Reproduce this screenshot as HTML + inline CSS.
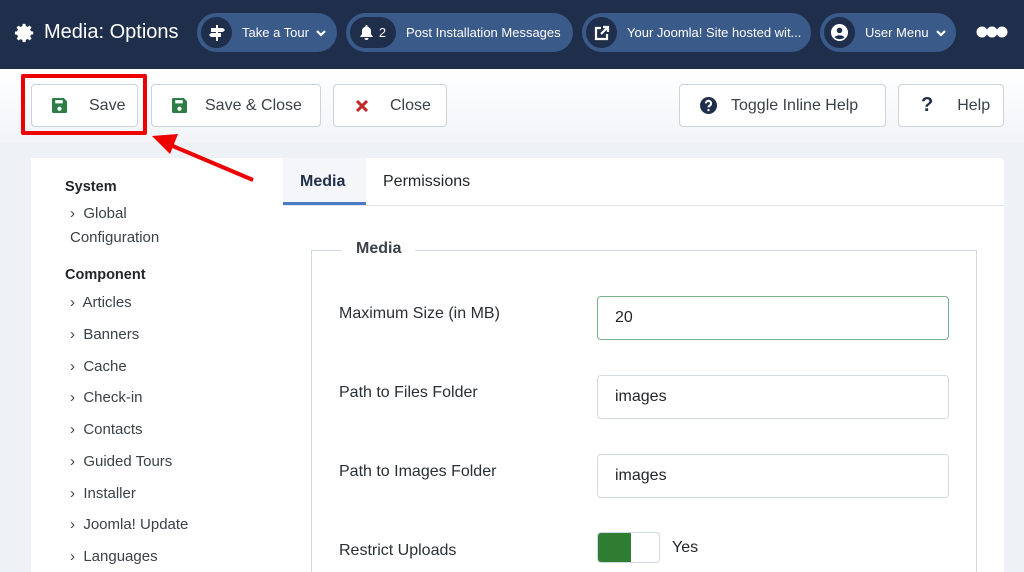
<!DOCTYPE html>
<html><head><meta charset="utf-8"><style>
*{box-sizing:border-box;margin:0;padding:0}
html,body{width:1024px;height:572px;overflow:hidden}
body{background:#eef1f6;font-family:"Liberation Sans",sans-serif;position:relative;color:#22262a}
.hdr{position:absolute;left:0;top:0;width:1024px;height:69px;background:#1f2e4a}
.title{position:absolute;left:14px;top:21px;color:#fff;font-size:20px;display:flex;align-items:center;gap:8px}
.pill{position:absolute;top:13px;height:39px;border-radius:20px;background:#3a5a8a;color:#fff;font-size:13px;display:flex;align-items:center}
.pill .ic{width:31px;height:31px;border-radius:50%;background:#1f2e4a;margin-left:4px;margin-right:10px;display:flex;align-items:center;justify-content:center;font-size:13px}
.tb{position:absolute;left:0;top:69px;width:1024px;height:74px;background:linear-gradient(#fff,#f1f4f8)}
.btn{position:absolute;top:84px;height:43px;border:1px solid #ccd3dc;border-radius:4px;background:#fff;font-size:16px;color:#3b4148;display:flex;align-items:center}
.side{position:absolute;left:31px;top:158px;width:252px;height:420px;background:#fff}
.side div{position:absolute;left:39px;font-size:15px;color:#3b4148}
.side b{position:absolute;left:34px;font-size:14.5px;color:#22262a}
.main{position:absolute;left:283px;top:158px;width:721px;height:420px;background:#fff;border-radius:0 4px 0 0;overflow:hidden}
.lbl{position:absolute;left:339px;font-size:16px;color:#2a2f35}
.inp{position:absolute;left:597px;width:352px;height:44px;border:1px solid #d4dae3;border-radius:4px;font-size:16px;padding:12px 17px;color:#22262a}
</style></head><body>
<div class="hdr">
<div class="title"><svg width="22" height="22" viewBox="0 0 24 24"><path fill="#fff" d="M12 8a4 4 0 100 8 4 4 0 000-8zm9 5.5v-3l-2.6-.5a7 7 0 00-.8-1.9l1.5-2.2-2.1-2.1-2.2 1.5a7 7 0 00-1.9-.8L12.5 2h-3l-.5 2.6a7 7 0 00-1.9.8L4.9 3.9 2.8 6l1.5 2.2a7 7 0 00-.8 1.9L1 10.5v3l2.6.5c.2.7.4 1.3.8 1.9l-1.5 2.2 2.1 2.1 2.2-1.5c.6.4 1.2.6 1.9.8l.4 2.5h3l.5-2.6c.7-.2 1.3-.4 1.9-.8l2.2 1.5 2.1-2.1-1.5-2.2c.4-.6.6-1.2.8-1.9z"/></svg>Media: Options</div>
<div class="pill" style="left:197px;width:140px"><span class="ic"><svg width="16" height="16" viewBox="0 0 16 16"><path fill="#fff" d="M7 0h2v3h5l2 2-2 2H9v1h3v4H9v4H7v-4H2L0 10l2-2h5V7H2V3h5z"/></svg></span>Take a Tour&nbsp;&nbsp;<svg width="10" height="8" viewBox="0 0 10 8"><path d="M1 2l4 4 4-4" stroke="#fff" stroke-width="2.2" fill="none"/></svg></div>
<div class="pill" style="left:346px;width:227px"><span class="ic" style="width:46px;border-radius:16px;gap:6px"><svg width="13" height="15" viewBox="0 0 13 15"><path fill="#fff" d="M6.5 0c.6 0 1 .4 1 1v.6A4.5 4.5 0 0111 6v3l2 3H0l2-3V6a4.5 4.5 0 013.5-4.4V1c0-.6.4-1 1-1zM4.5 13h4a2 2 0 01-4 0z"/></svg>2</span>Post Installation Messages</div>
<div class="pill" style="left:582px;width:229px"><span class="ic"><svg width="16" height="16" viewBox="0 0 16 16"><path d="M7 3H2v11h11V9M9 2h5v5M14 2L7 9" stroke="#fff" stroke-width="2.2" fill="none"/></svg></span>Your Joomla! Site hosted wit...</div>
<div class="pill" style="left:820px;width:136px"><span class="ic"><svg width="17" height="17" viewBox="0 0 16 16"><circle cx="8" cy="8" r="8" fill="#fff"/><circle cx="8" cy="6" r="2.6" fill="#1f2e4a"/><path d="M3.3 12.5a5.5 4 0 019.4 0A7 7 0 013.3 12.5z" fill="#1f2e4a"/></svg></span>User Menu&nbsp;&nbsp;<svg width="10" height="8" viewBox="0 0 10 8"><path d="M1 2l4 4 4-4" stroke="#fff" stroke-width="2.2" fill="none"/></svg></div>
<svg style="position:absolute;left:976px;top:26px" width="32" height="12"><circle cx="6" cy="6" r="5.5" fill="#fff"/><circle cx="16" cy="6" r="5.5" fill="#fff"/><circle cx="26" cy="6" r="5.5" fill="#fff"/></svg>
</div>
<div class="tb"></div>
<div class="btn" style="left:31px;width:107px"><svg style="margin:0 22px 0 20px" width="15" height="15" viewBox="0 0 14 14"><path fill="#2e7d46" d="M0 1a1 1 0 011-1h10l3 3v10a1 1 0 01-1 1H1a1 1 0 01-1-1zM3 2v3h7V2zm4 6a2 2 0 100 4 2 2 0 000-4z"/></svg>Save</div>
<div style="position:absolute;left:21px;top:74px;width:126px;height:61px;border:4px solid #e00;border-radius:2px"></div>
<div class="btn" style="left:151px;width:170px"><svg style="margin:0 18px 0 20px" width="15" height="15" viewBox="0 0 14 14"><path fill="#2e7d46" d="M0 1a1 1 0 011-1h10l3 3v10a1 1 0 01-1 1H1a1 1 0 01-1-1zM3 2v3h7V2zm4 6a2 2 0 100 4 2 2 0 000-4z"/></svg>Save &amp; Close</div>
<div class="btn" style="left:333px;width:114px"><svg style="margin:0 22px 0 22px" width="12" height="12" viewBox="0 0 12 12"><path d="M1 1l10 10M11 1L1 11" stroke="#c62828" stroke-width="3"/></svg>Close</div>
<div class="btn" style="left:679px;width:207px"><svg style="margin:0 14px 0 20px" width="17" height="17" viewBox="0 0 16 16"><circle cx="8" cy="8" r="8" fill="#1f2e4a"/><path d="M5.6 6a2.4 2.4 0 114 1.8c-.9.6-1.6 1-1.6 2" stroke="#fff" stroke-width="2" fill="none"/><circle cx="8" cy="12.3" r="1.1" fill="#fff"/></svg>Toggle Inline Help</div>
<div class="btn" style="left:898px;width:106px"><span style="color:#1f2e4a;margin:0 24px 0 22px;font-weight:bold;font-size:20px">?</span>Help</div>
<div class="side">
<b style="top:21px">System</b>
<div style="top:47px">›&nbsp; Global</div><div style="top:71px;left:39px">Configuration</div>
<b style="top:109px">Component</b>
<div style="top:136px">›&nbsp; Articles</div>
<div style="top:168px">›&nbsp; Banners</div>
<div style="top:200px">›&nbsp; Cache</div>
<div style="top:231px">›&nbsp; Check-in</div>
<div style="top:263px">›&nbsp; Contacts</div>
<div style="top:295px">›&nbsp; Guided Tours</div>
<div style="top:327px">›&nbsp; Installer</div>
<div style="top:358px">›&nbsp; Joomla! Update</div>
<div style="top:390px">›&nbsp; Languages</div>
</div>
<svg style="position:absolute;left:148px;top:130px;z-index:5" width="110" height="55"><path d="M105 50 L20 14" stroke="#e00" stroke-width="4"/><path d="M4 6 L30 4 L22 24 Z" fill="#e00"/></svg>
<div class="main">
<div style="position:absolute;left:0;top:0;width:83px;height:47px;background:#f4f6f9;border-bottom:3px solid #4a7cc4"></div>
<div style="position:absolute;left:17px;top:15px;font-size:16px;font-weight:bold;color:#1f2e4a">Media</div>
<div style="position:absolute;left:100px;top:15px;font-size:16px">Permissions</div>
<div style="position:absolute;left:0;top:47px;width:721px;border-top:1px solid #e2e6ec"></div>
<div style="position:absolute;left:28px;top:92px;width:666px;height:340px;border:1px solid #cfd8e3;border-bottom:none"></div>
<div style="position:absolute;left:59px;top:82px;padding:0 14px;background:#fff;font-size:16px;font-weight:bold;color:#3b4148">Media</div>
</div>
<div class="lbl" style="top:305px">Maximum Size (in MB)</div>
<div class="inp" style="top:296px;border-color:#7ab08a">20</div>
<div class="lbl" style="top:384px">Path to Files Folder</div>
<div class="inp" style="top:375px">images</div>
<div class="lbl" style="top:463px">Path to Images Folder</div>
<div class="inp" style="top:454px">images</div>
<div class="lbl" style="top:542px">Restrict Uploads</div>
<div style="position:absolute;left:597px;top:532px;width:63px;height:31px;border:1px solid #cfd8e3;border-radius:4px;overflow:hidden"><div style="width:33px;height:100%;background:#2e7d32"></div></div>
<div style="position:absolute;left:672px;top:539px;font-size:16px">Yes</div>
</body></html>
